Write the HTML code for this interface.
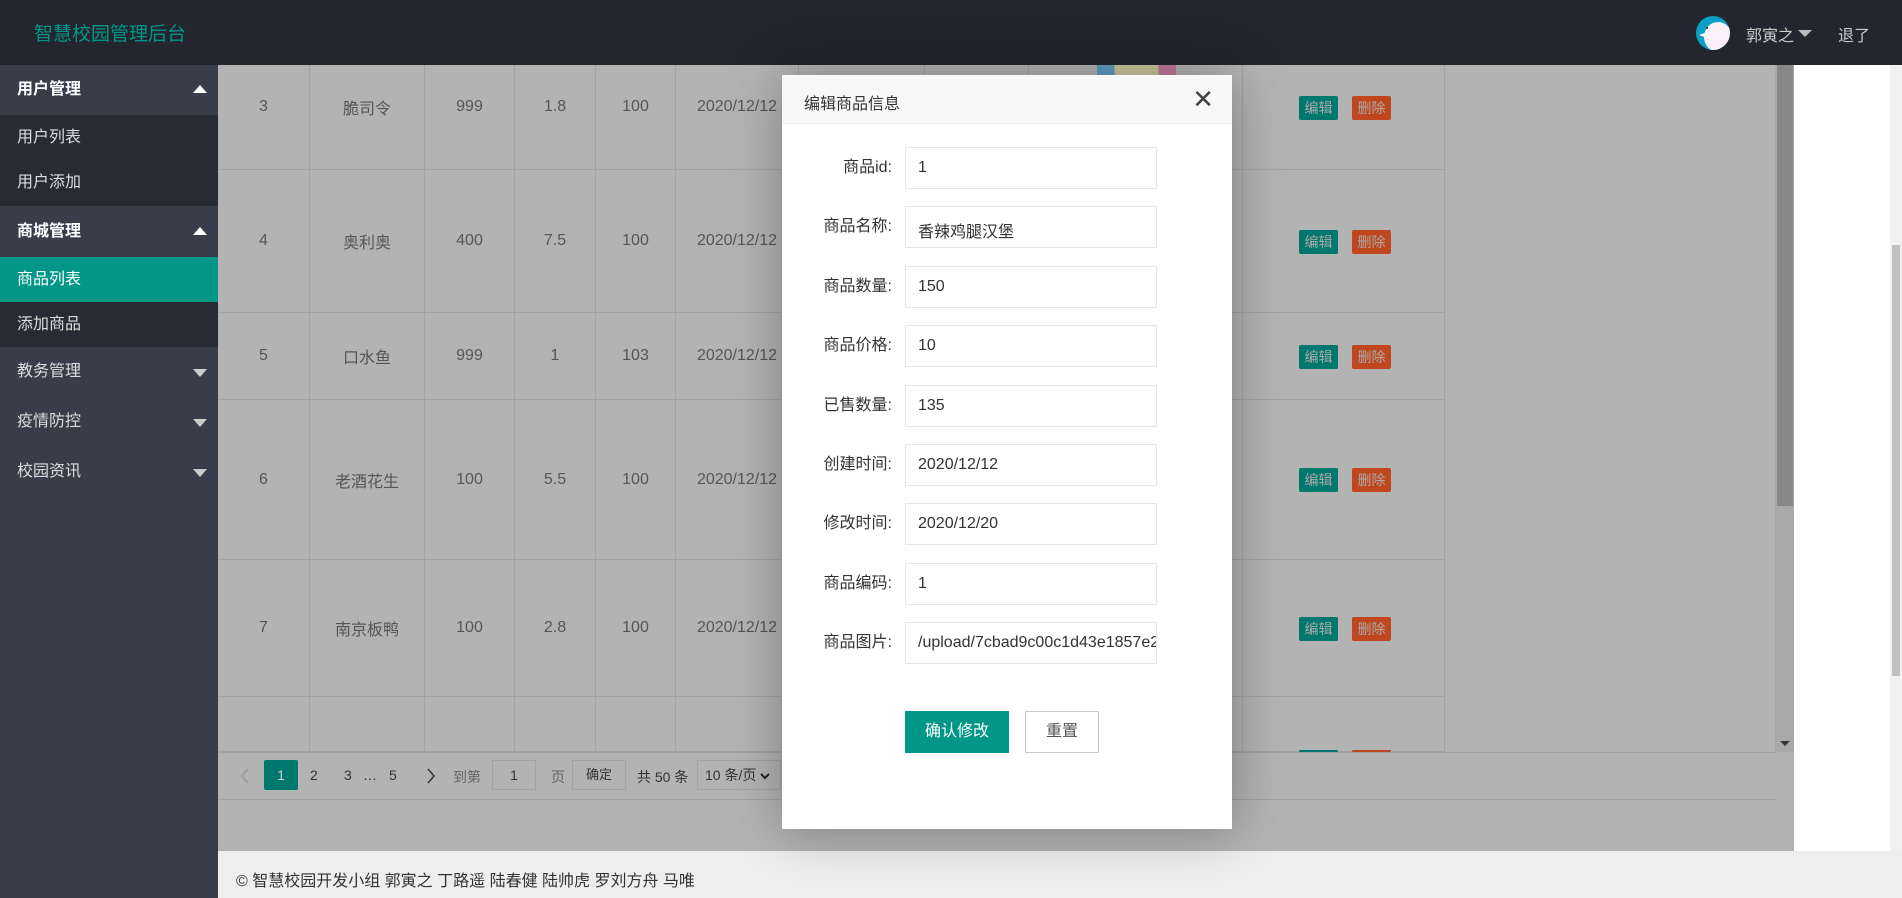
<!DOCTYPE html>
<html><head><meta charset="utf-8"><style>
*{margin:0;padding:0;box-sizing:border-box}
body{width:1902px;height:898px;overflow:hidden;position:relative;font-family:"Liberation Sans","Noto Sans CJK SC",sans-serif;background:#fff}
.hd{position:absolute;left:0;top:0;width:1902px;height:65px;background:#23262e}
.logo{position:absolute;left:34px;top:19px;color:#009688;font-size:19px}
.side{position:absolute;left:0;top:65px;width:218px;height:833px;background:#393d49}
.side div{position:relative;color:#fff;font-size:16px;padding-left:17px}
.p{background:#393d49;font-weight:bold}
.s{background:#282b33;color:#ddd!important;font-weight:normal}
.a{background:#009688!important;color:#fff!important}
.tri{position:absolute;right:11px;width:0;height:0;border-left:7px solid transparent;border-right:7px solid transparent}
.up{border-bottom:8px solid #fff;top:calc(50% - 5px)}
.dn{border-top:8px solid #ccc;top:calc(50% - 3px)}
.main{position:absolute;left:218px;top:65px;width:1576px;height:786px;background:#b3b3b3;overflow:hidden}
.cell{position:absolute;border-right:1px solid #a3a3a3;border-bottom:1px solid #a3a3a3;color:#555;font-size:16px;display:flex;align-items:center;justify-content:center}
.be{position:absolute;width:39px;height:24px;font-size:14px;color:#aaa;display:flex;align-items:center;justify-content:center;border-radius:2px}
.foot{position:absolute;left:218px;top:851px;width:1684px;height:47px;background:#eee;font-size:16px;color:#333;padding:16px 0 0 18px}
.rw{position:absolute;left:1794px;top:65px;width:96px;height:786px;background:#fff}
.sb{position:absolute;left:1890px;top:65px;width:12px;height:786px;background:#f1f1f1}
.modal{position:absolute;left:782px;top:75px;width:450px;height:754px;background:#fff;box-shadow:1px 1px 50px rgba(0,0,0,.3)}
.mt{height:49px;background:#f8f8f8;border-bottom:1px solid #eee;font-size:16px;color:#333;padding:15px 0 0 22px;position:relative}
.lb{position:absolute;right:340px;width:120px;text-align:right;font-size:16px;color:#333}
.in{position:absolute;left:123px;width:252px;height:42px;border:1px solid #e6e6e6;font-size:16px;color:#333;padding:11px 0 0 12px;white-space:nowrap;overflow:hidden}
.pg{position:absolute;top:752px;font-size:14px;color:#333}
</style></head><body>
<div class="hd"><div class="logo">智慧校园管理后台</div>
<svg style="position:absolute;left:1696px;top:16px" width="34" height="34" viewBox="0 0 34 34"><defs><clipPath id="c"><circle cx="17" cy="17" r="17"/></clipPath></defs><circle cx="17" cy="17" r="17" fill="#0aa0c8"/><g clip-path="url(#c)"><ellipse cx="22" cy="21" rx="14" ry="15" fill="#fdf0fb"/><path d="M3 19 L11 16 L8 21Z" fill="#fdf0fb"/></g><circle cx="11" cy="12" r="1" fill="#222"/></svg>
<div style="position:absolute;left:1746px;top:22px;color:#ccc;font-size:16px">郭寅之</div>
<div style="position:absolute;left:1798px;top:30px;border-left:7px solid transparent;border-right:7px solid transparent;border-top:7px solid #bbb"></div>
<div style="position:absolute;left:1838px;top:22px;color:#ccc;font-size:16px">退了</div>
</div>
<div class="side">
<div class="p" style="height:50px;line-height:50px">用户管理<span class="tri up"></span></div>
<div class="s" style="height:45px;line-height:45px">用户列表</div>
<div class="s" style="height:46px;line-height:46px">用户添加</div>
<div class="p" style="height:51px;line-height:51px">商城管理<span class="tri up"></span></div>
<div class="s a" style="height:45px;line-height:45px">商品列表</div>
<div class="s" style="height:45px;line-height:45px">添加商品</div>
<div class="p" style="height:50px;line-height:50px;font-weight:normal;color:#ddd">教务管理<span class="tri dn"></span></div>
<div class="p" style="height:49px;line-height:49px;font-weight:normal;color:#ddd">疫情防控<span class="tri dn"></span></div>
<div class="p" style="height:51px;line-height:51px;font-weight:normal;color:#ddd">校园资讯<span class="tri dn"></span></div>
</div>
<div class="main" id="m"></div>
<div class="rw"></div>
<div class="sb"><div style="position:absolute;left:2px;top:180px;width:8px;height:431px;background:#c1c1c1"></div></div>
<div class="foot">© 智慧校园开发小组 郭寅之 丁路遥 陆春健 陆帅虎 罗刘方舟 马唯</div>
<div class="modal">
<div class="mt">编辑商品信息<span style="position:absolute;right:18px;top:9px;font-size:26px;color:#444;font-weight:300">✕</span></div>
</div>
<script>
var m=document.getElementById('m'),h='';
var cols=[0,92,207,297,378,458,581,707,811,1025,1227];
var rows=[[0,105,'3','脆司令','999','1.8','100','2020/12/12'],[105,248,'4','奥利奥','400','7.5','100','2020/12/12'],[248,335,'5','口水鱼','999','1','103','2020/12/12'],[335,495,'6','老酒花生','100','5.5','100','2020/12/12'],[495,632,'7','南京板鸭','100','2.8','100','2020/12/12'],[632,687,'','','','','','']];
rows.forEach(function(r,ri){var pb=ri==0?'padding-bottom:20px;':'';for(var i=0;i<10;i++){var t=i<6?r[i+2]:'';h+='<div class="cell" style="'+pb+'left:'+cols[i]+'px;top:'+r[0]+'px;width:'+(cols[i+1]-cols[i])+'px;height:'+(r[1]-r[0])+'px">'+t+'</div>';}
var cy=(r[0]+r[1])/2-12-(ri==0?10:0);if(r[2]){h+='<div class="be" style="left:1081px;top:'+cy+'px;background:#00786d">编辑</div><div class="be" style="left:1134px;top:'+cy+'px;background:#c0461d">删除</div>';}else{h+='<div class="be" style="left:1081px;top:'+(r[1]-2)+'px;height:2px;background:#00786d"></div><div class="be" style="left:1134px;top:'+(r[1]-2)+'px;height:2px;background:#c0461d"></div>';}});
h+='<div style="position:absolute;left:879px;top:0;width:79px;height:10px;background:linear-gradient(90deg,#5e9cc0 0 22%,#c9c59a 22% 78%,#c07a9a 78%)"></div>';
h+='<div style="position:absolute;left:1557px;top:0;width:19px;height:687px;background:#a9a9a9"><div style="position:absolute;left:2px;top:0;width:16px;height:441px;background:#878787"></div><div style="position:absolute;left:5px;top:676px;border-left:5px solid transparent;border-right:5px solid transparent;border-top:5px solid #333"></div></div>';
h+='<div style="position:absolute;left:0;top:687px;width:1558px;height:48px;border-bottom:1px solid #a3a3a3;border-top:1px solid #a3a3a3"></div>';
var P=function(l,t,s){h+='<div class="pg" style="left:'+(l-218)+'px;top:'+(t-65)+'px;'+(s||'')+'">';};
P(240,768);h+='<svg width="10" height="16"><path d="M8 1 L2 8 L8 15" fill="none" stroke="#999" stroke-width="1.5"/></svg></div>';
P(264,760,'width:34px;height:30px;background:#00786d;color:#ccc;text-align:center;line-height:30px;border-radius:2px');h+='1</div>';
P(310,767);h+='2</div>';P(344,767);h+='3</div>';P(363,767);h+='…</div>';P(389,767);h+='5</div>';
P(426,768);h+='<svg width="10" height="16"><path d="M2 1 L8 8 L2 15" fill="none" stroke="#333" stroke-width="1.5"/></svg></div>';
P(453,767,'color:#666');h+='到第</div>';
P(492,760,'width:44px;height:30px;border:1px solid #a3a3a3;text-align:center;line-height:28px');h+='1</div>';
P(551,767,'color:#666');h+='页</div>';
P(572,760,'width:54px;height:30px;border:1px solid #a3a3a3;text-align:center;line-height:28px;font-size:13px');h+='确定</div>';
P(637,767);h+='共 50 条</div>';
P(697,760,'width:84px;height:30px;border:1px solid #a3a3a3;line-height:28px;padding-left:7px');h+='10 条/页 <svg width="10" height="8"><path d="M1 2 L5 6 L9 2" fill="none" stroke="#222" stroke-width="2"/></svg></div>';
m.innerHTML=h;
var md=document.querySelector('.modal'),f=[['商品id:','1'],['商品名称:','香辣鸡腿汉堡'],['商品数量:','150'],['商品价格:','10'],['已售数量:','135'],['创建时间:','2020/12/12'],['修改时间:','2020/12/20'],['商品编码:','1'],['商品图片:','/upload/7cbad9c00c1d43e1857e2']],s='';
f.forEach(function(x,i){var t=72+i*59.4;s+='<div class="lb" style="top:'+(t+6)+'px">'+x[0]+'</div><div class="in" style="top:'+t+'px">'+x[1]+'</div>';});
s+='<div style="position:absolute;left:123px;top:636px;width:104px;height:42px;background:#009688;color:#fff;font-size:16px;text-align:center;line-height:42px">确认修改</div>';
s+='<div style="position:absolute;left:243px;top:636px;width:74px;height:42px;border:1px solid #c9c9c9;color:#555;font-size:16px;text-align:center;line-height:40px">重置</div>';
md.insertAdjacentHTML('beforeend',s);
</script>
</body></html>
